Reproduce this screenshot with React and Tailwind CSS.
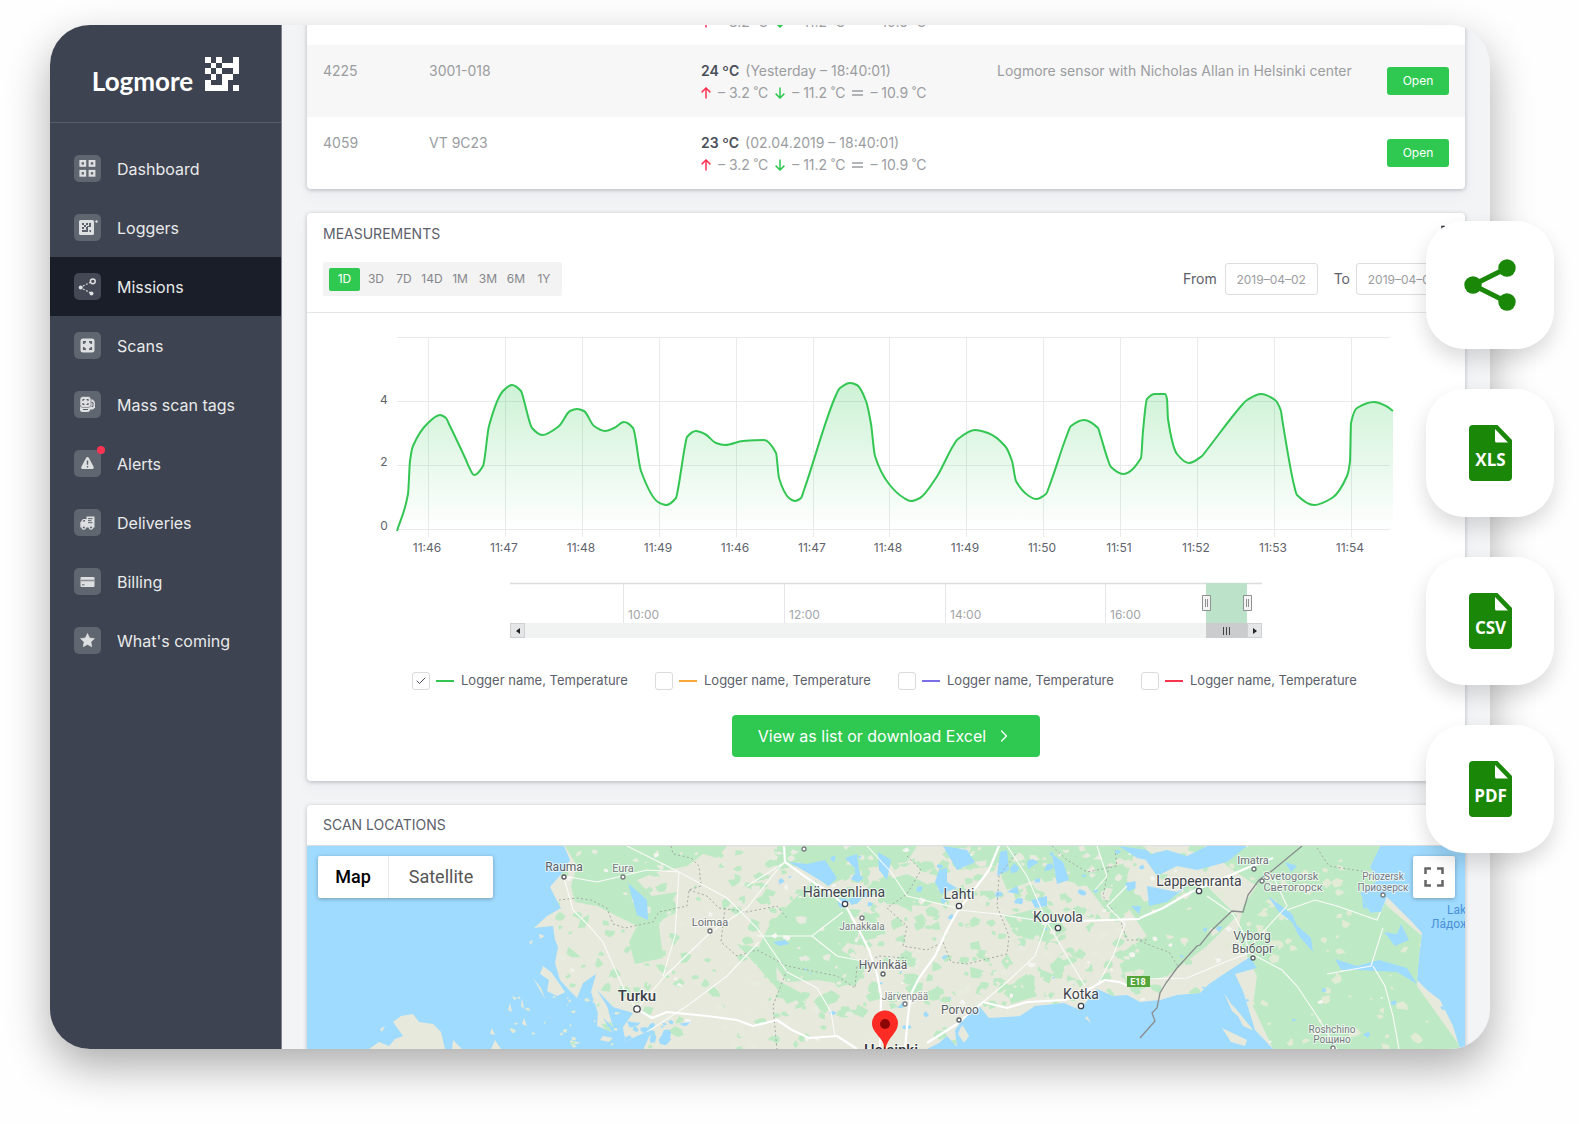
import React, { useState } from 'react'
import { ChevronRight, Check } from 'lucide-react'

/* ---------- Sidebar icons ---------- */

const iconFill = '#dedfe1'

const DashboardIcon = () => (
  <svg viewBox="0 0 27 27" className="w-[27px] h-[27px]" fill="none" stroke={iconFill} strokeWidth="2.2">
    <rect x="6.5" y="6.1" width="4.6" height="4.6" />
    <rect x="15.7" y="6.1" width="4.6" height="4.6" />
    <rect x="6.5" y="16" width="4.6" height="4.6" />
    <rect x="15.7" y="16" width="4.6" height="4.6" />
  </svg>
)

const LoggersIcon = () => (
  <svg viewBox="0 0 27 27" className="w-[27px] h-[27px]">
    <rect x="5" y="6" width="15" height="15" rx="1.5" fill={iconFill} />
    <path d="M8 9h2v2H8zM12 9h2v2h-2zM10 11h2v2h-2zM15 9h2v4h-4v-1h2zM8 13h2v2H8zM8 16h4v-3h2v5H8zM15.500 16h1.500v2h-1.500z" fill="#5b616b" />
    <circle cx="22.500" cy="7.500" r="1.200" fill={iconFill} />
  </svg>
)

const MissionsIcon = () => (
  <svg viewBox="0 0 27 27" className="w-[27px] h-[27px]">
    <circle cx="18.800" cy="8.300" r="2.400" fill="none" stroke={iconFill} strokeWidth="1.500" />
    <circle cx="6.700" cy="14.600" r="2" fill={iconFill} />
    <circle cx="17.500" cy="20.600" r="2" fill={iconFill} />
    <path d="M9 13l7-3.500M9 16l7 3.600" stroke={iconFill} strokeWidth="1.200" strokeDasharray="1.800 1.600" />
  </svg>
)

const ScansIcon = () => (
  <svg viewBox="0 0 27 27" className="w-[27px] h-[27px]">
    <rect x="6.500" y="6.500" width="14" height="14" rx="2.500" fill={iconFill} />
    <path d="M9.800 12V9.800H12M15 9.800h2.200V12M17.200 15v2.200H15M12 17.200H9.800V15" fill="none" stroke="#5b616b" strokeWidth="1.700" />
  </svg>
)

const MassScanIcon = () => (
  <svg viewBox="0 0 27 27" className="w-[27px] h-[27px]">
    <path d="M15 8.500h4l2 3v5l-2 2h-4z" fill={iconFill} />
    <path d="M17.500 11.500h1.500v4h-1.500" fill="none" stroke="#5b616b" />
    <rect x="6" y="14" width="10" height="7" rx="2.500" fill={iconFill} />
    <rect x="6" y="5.500" width="11" height="11" rx="3" fill={iconFill} stroke="#5f666f" strokeWidth=".6" />
    <path d="M9 10V8.500h1.500M12.500 8.500H14V10M14 12v1.500h-1.500M10.500 13.500H9V12M9 18.500h5" fill="none" stroke="#5b616b" strokeWidth="1.200" />
  </svg>
)

const AlertsIcon = () => (
  <svg viewBox="0 0 27 27" className="w-[27px] h-[27px]">
    <path d="M13.500 8.500L18.300 17.500H8.700Z" fill={iconFill} stroke={iconFill} strokeWidth="3" strokeLinejoin="round" />
    <path d="M13.500 10.500v4.200M13.500 16v1.500" stroke="#5b616b" strokeWidth="1.400" />
  </svg>
)

const DeliveriesIcon = () => (
  <svg viewBox="0 0 27 27" className="w-[27px] h-[27px]">
    <path d="M12.500 7.500h8v11H6.300v-5L9 10h3.500z" fill={iconFill} />
    <path d="M8.500 12.500l1.300-1.500h1.200v1.500z" fill="#5b616b" />
    <path d="M14 9.700h4.500M14 11.700h3.500M14 13.700h4.500" stroke="#5b616b" />
    <circle cx="9.800" cy="18.500" r="1.700" fill="#5b616b" stroke={iconFill} strokeWidth="1.300" />
    <circle cx="17" cy="18.500" r="1.700" fill="#5b616b" stroke={iconFill} strokeWidth="1.300" />
  </svg>
)

const BillingIcon = () => (
  <svg viewBox="0 0 27 27" className="w-[27px] h-[27px]">
    <rect x="6.500" y="9" width="14" height="10" rx="1" fill={iconFill} />
    <path d="M6.500 12.500h14" stroke="#8d9198" strokeWidth="1.600" />
    <path d="M8 16.800h2.500" stroke="#5b616b" />
  </svg>
)

const StarIcon = () => (
  <svg viewBox="0 0 27 27" className="w-[27px] h-[27px]">
    <path d="M13.500 6.500l2.100 4.500 4.900.6-3.600 3.300.9 4.900-4.300-2.400-4.300 2.400.9-4.900-3.600-3.300 4.900-.6z" fill={iconFill} stroke={iconFill} strokeLinejoin="round" strokeWidth=".6" />
  </svg>
)

const navItems = [
  { label: 'Dashboard', icon: <DashboardIcon /> },
  { label: 'Loggers', icon: <LoggersIcon /> },
  { label: 'Missions', icon: <MissionsIcon />, active: true },
  { label: 'Scans', icon: <ScansIcon /> },
  { label: 'Mass scan tags', icon: <MassScanIcon /> },
  { label: 'Alerts', icon: <AlertsIcon />, badge: true },
  { label: 'Deliveries', icon: <DeliveriesIcon /> },
  { label: 'Billing', icon: <BillingIcon /> },
  { label: "What's coming", icon: <StarIcon /> }
]

// 6x6 pixel mark next to the wordmark
const logoRows = ['#.#..#', '.#.###', '#.#..#', '.#.##.', '#..#..', '####.#']

const Logo = () => (
  <div className="flex items-start justify-center gap-3 h-[98px] pt-8 border-b border-[#575d69]">
    <span className="pt-2 font-['Lato'] font-bold text-[26px] leading-8 text-white">Logmore</span>
    <svg viewBox="0 0 6 6" className="w-[34px] h-[34px]" fill="#fff" shapeRendering="crispEdges">
      {logoRows.map((row, y) =>
        row.split('').map((c, x) => c === '#' && <rect key={`${x}-${y}`} x={x} y={y} width="1" height="1" />)
      )}
    </svg>
  </div>
)

const Sidebar = () => (
  <aside className="w-[232px] shrink-0 bg-[#3d4350] border-r border-[#7d828b]">
    <Logo />
    <nav className="pt-4">
      {navItems.map((item) => (
        <a
          key={item.label}
          href="#"
          className={`flex items-center gap-4 h-[59px] px-6 text-base text-[#e9eaeb] ${item.active ? 'bg-[#191e29]' : ''}`}
        >
          <span className={`relative rounded-[5px] ${item.active ? 'bg-[#434854]' : 'bg-[#5f666f]'}`}>
            {item.icon}
            {item.badge && <span className="absolute -top-1 -right-1 w-2 h-2 rounded-full bg-[#ff3352]"></span>}
          </span>
          {item.label}
        </a>
      ))}
    </nav>
  </aside>
)

/* ---------- Loggers table ---------- */

const rows = [
  { id: '4225', name: '3001-018', temp: '24 ºC', time: '(Yesterday – 18:40:01)', note: 'Logmore sensor with Nicholas Allan in Helsinki center' },
  { id: '4059', name: 'VT 9C23', temp: '23 ºC', time: '(02.04.2019 – 18:40:01)', note: '' }
]

const Arrow = ({ up }) => (
  <svg viewBox="0 0 10 12" className={`w-[10px] h-3 ${up ? 'text-[#ff3352]' : 'text-[#2fc851] rotate-180'}`} fill="none" stroke="currentColor" strokeWidth="1.500">
    <path d="M5 11.500V1M.6 5.400L5 1l4.400 4.400" />
  </svg>
)

const Readings = () => (
  <div className="flex items-center gap-[7px] whitespace-nowrap">
    <Arrow up />– 3.2 ˚C
    <Arrow />– 11.2 ˚C
    <svg viewBox="0 0 11 6" className="w-[11px] h-[6px]" stroke="#9b9da1" strokeWidth="1.500"><path d="M0 1h11M0 5h11" /></svg>– 10.9 ˚C
  </div>
)

const LoggersTable = () => (
  <table className="w-full table-fixed text-left text-sm leading-[22px] text-[#9b9da1]">
    <colgroup>
      <col className="w-[122px]" />
      <col className="w-[272px]" />
      <col className="w-[296px]" />
      <col />
      <col className="w-[94px]" />
    </colgroup>
    <tbody>
      <tr className="h-[34px]">
        <td colSpan={2}></td>
        <td className="align-top"><Readings /></td>
        <td colSpan={2}></td>
      </tr>
      {rows.map((row, index) => (
        <tr key={row.id} className={`h-[72px] ${index % 2 ? '' : 'bg-[#f7f7f7]'}`}>
          <td className="pt-[15px] pl-4 align-top">{row.id}</td>
          <td className="pt-[15px] align-top">{row.name}</td>
          <td className="pt-[15px] align-top">
            <strong className="font-semibold text-[#4a4e5a]">{row.temp}</strong>
            <span className="ml-[6px]">{row.time}</span>
            <Readings />
          </td>
          <td className="pt-[15px] align-top whitespace-nowrap">{row.note}</td>
          <td className="align-middle pl-4">
            <button className="block w-[62px] h-7 rounded-[3px] bg-[#2fc851] text-xs text-white">Open</button>
          </td>
        </tr>
      ))}
    </tbody>
  </table>
)

/* ---------- Measurements ---------- */

const ranges = ['1D', '3D', '7D', '14D', '1M', '3M', '6M', '1Y']
const times = ['11:46', '11:47', '11:48', '11:49', '11:46', '11:47', '11:48', '11:49', '11:50', '11:51', '11:52', '11:53', '11:54']

const points = [
  [90, 218], [101, 181], [103, 148], [106, 133], [121, 110], [133, 102], [139, 105], [142, 111], [159, 147], [162, 154],
  [167, 162], [176, 153], [182, 113], [196, 78], [205, 72], [214, 78], [216, 84], [223, 110], [225, 115], [235, 122],
  [252, 113], [263, 98], [270, 96], [277, 98], [287, 113], [298, 118], [307, 115], [317, 109], [326, 115], [334, 158],
  [351, 189], [359, 192], [369, 185], [371, 176], [378, 133], [380, 124], [389, 118], [398, 121], [409, 130], [418, 132],
  [436, 128], [457, 127], [469, 140], [472, 165], [482, 185], [488, 188], [494, 185], [497, 177], [529, 82], [533, 75],
  [543, 70], [550, 72], [559, 88], [564, 111], [568, 143], [582, 171], [597, 185], [604, 188], [613, 185], [629, 165],
  [632, 160], [646, 133], [651, 126], [668, 117], [681, 120], [698, 133], [705, 148], [709, 168], [722, 183], [729, 186],
  [739, 181], [742, 174], [760, 122], [764, 113], [777, 107], [791, 115], [793, 121], [801, 147], [804, 154], [816, 161],
  [834, 145], [836, 118], [840, 86], [848, 81], [858, 81], [860, 86], [861, 106], [870, 141], [882, 150], [895, 143],
  [899, 138], [935, 92], [940, 87], [954, 81], [968, 87], [974, 98], [975, 105], [987, 172], [990, 182], [1007, 192],
  [1025, 185], [1040, 163], [1043, 148], [1044, 110], [1050, 95], [1067, 89], [1079, 93], [1086, 98]
]

// Monotone cubic interpolation, so the curve never overshoots a reading
const smoothPath = (pts) => {
  const slope = pts.slice(1).map((p, i) => (p[1] - pts[i][1]) / (p[0] - pts[i][0]))
  const tangent = pts.map((p, i) => {
    if (i === 0) return slope[0]
    if (i === pts.length - 1) return slope[i - 1]
    const a = slope[i - 1]
    const b = slope[i]
    return a * b <= 0 ? 0 : (2 * a * b) / (a + b)
  })
  let d = `M${pts[0][0]} ${pts[0][1]}`
  for (let i = 1; i < pts.length; i++) {
    const [x0, y0] = pts[i - 1]
    const [x1, y1] = pts[i]
    const h = (x1 - x0) / 3
    d += `C${x0 + h} ${y0 + h * tangent[i - 1]} ${x1 - h} ${y1 - h * tangent[i]} ${x1} ${y1}`
  }
  return d
}

const curve = smoothPath(points)

const Chart = () => (
  <svg viewBox="0 0 1158 254" className="block w-full">
    <defs>
      <linearGradient id="area" x1="0" y1="0" x2="0" y2="1">
        <stop offset="0" stopColor="#2fc851" stopOpacity=".24" />
        <stop offset="1" stopColor="#2fc851" stopOpacity="0" />
      </linearGradient>
    </defs>
    <g stroke="#e8eaeb">
      {[24, 88, 152, 216].map((y) => <path key={y} d={`M90 ${y + 0.5}H1083`} />)}
      {times.map((t, i) => <path key={i} d={`M${Math.round(121 + i * 76.9) + 0.5} 24V224`} />)}
    </g>
    <path d={`${curve}V218H90Z`} fill="url(#area)" />
    <path d={curve} fill="none" stroke="#33c653" strokeWidth="2" />
    <g fill="#5f636c" fontSize="12" textAnchor="middle">
      <text x="77" y="91">4</text>
      <text x="77" y="153">2</text>
      <text x="77" y="217">0</text>
      {times.map((t, i) => <text key={i} x={Math.round(120 + i * 76.9)} y="239">{t}</text>)}
    </g>
  </svg>
)

const Navigator = () => (
  <div className="w-[752px] max-w-full mx-auto mt-4">
    <svg viewBox="0 0 752 40" className="block w-full overflow-visible">
      <path d="M0 .5H752" stroke="#d9dbdc" strokeWidth="1.500" />
      <g stroke="#e4e6e7">
        <path d="M113.500 1V40M274.500 1V40M435.500 1V40M595.500 1V40" />
      </g>
      <g fill="#a2a4a7" fontSize="12">
        <text x="118" y="36">10:00</text>
        <text x="279" y="36">12:00</text>
        <text x="440" y="36">14:00</text>
        <text x="600" y="36">16:00</text>
      </g>
      <rect x="696" y="0" width="41" height="40" fill="#bce3ca" />
      <g fill="#f4f4f4" stroke="#8f9193">
        <path d="M692.500 12.500h8v15h-8zM733.500 12.500h8v15h-8zM695.500 16v8M697.500 16v8M736.500 16v8M738.500 16v8" />
      </g>
    </svg>
    <div className="flex h-[15px] bg-[#f1f3f3]">
      <button aria-label="Scroll left" className="w-[15px] border border-[#cfd0d1] bg-[#e5e6e7] flex items-center justify-center">
        <svg viewBox="0 0 4 6" className="w-1 h-[6px]" fill="#222"><path d="M4 0v6L0 3z" /></svg>
      </button>
      <div className="flex-1"></div>
      <div className="w-[41px] bg-[#cbcccd] flex items-center justify-center gap-[2px]">
        <span className="w-px h-2 bg-[#444]"></span>
        <span className="w-px h-2 bg-[#444]"></span>
        <span className="w-px h-2 bg-[#444]"></span>
      </div>
      <button aria-label="Scroll right" className="w-[15px] border border-[#cfd0d1] bg-[#e5e6e7] flex items-center justify-center">
        <svg viewBox="0 0 4 6" className="w-1 h-[6px]" fill="#222"><path d="M0 0v6l4-3z" /></svg>
      </button>
    </div>
  </div>
)

const series = [
  { id: 's1', line: 'bg-[#33c653]', on: true },
  { id: 's2', line: 'bg-[#f7a93b]', on: false },
  { id: 's3', line: 'bg-[#7b6fe8]', on: false },
  { id: 's4', line: 'bg-[#f8344f]', on: false }
]

const Measurements = () => {
  const [range, setRange] = useState('1D')
  const [visible, setVisible] = useState(series.map((s) => s.on))

  const toggle = (index) => setVisible((prev) => prev.map((v, i) => (i === index ? !v : v)))

  return (
    <section className="bg-white rounded-[4px] shadow-[0_1px_4px_rgba(30,40,60,0.28),0_8px_20px_rgba(0,0,0,0.03)]">
      <div className="px-4 pt-[11px] pb-4 border-b border-[#e4e6e7]">
        <div className="flex items-start justify-between h-5">
          <h2 className="text-sm text-[#5c606b]">MEASUREMENTS</h2>
          <button aria-label="Expand">
            <svg viewBox="0 0 12 12" className="w-3 h-3" fill="none" stroke="#2a2d36" strokeWidth="1.500"><path d="M5 6V2.500H8M11 8v3H8" /></svg>
          </button>
        </div>
        <div className="flex items-center justify-between mt-[18px]">
          <div className="flex items-center h-[34px] pl-[6px] pr-1 rounded-[2px] bg-[#f3f3f3] text-xs text-[#85878c]">
            {ranges.map((r) => (
              <button
                key={r}
                onClick={() => setRange(r)}
                className={r === range ? 'w-[31px] h-[23px] mr-[2px] rounded-[2px] bg-[#2fc851] text-white' : 'w-7 h-[23px]'}
              >
                {r}
              </button>
            ))}
          </div>
          <div className="flex items-center text-sm text-[#5c606b]">
            <label htmlFor="from">From</label>
            <input id="from" type="text" defaultValue="2019–04–02" className="w-[93px] h-8 ml-2 rounded-[3px] border border-[#dcddde] text-center text-xs text-[#9b9da1]" />
            <label htmlFor="to" className="ml-4">To</label>
            <input id="to" type="text" defaultValue="2019–04–02" className="w-[93px] h-8 ml-[6px] rounded-[3px] border border-[#dcddde] text-center text-xs text-[#9b9da1]" />
          </div>
        </div>
      </div>

      <Chart />
      <Navigator />

      <div className="flex justify-center gap-6 mt-[33px]">
        {series.map((s, index) => (
          <label key={s.id} htmlFor={s.id} className="flex items-center w-[219px] h-5 text-[13px] text-[#5c606b] whitespace-nowrap">
            <span className="relative flex shrink-0 w-[18px] h-[18px]">
              <input
                id={s.id}
                type="checkbox"
                checked={visible[index]}
                onChange={() => toggle(index)}
                className="appearance-none w-[18px] h-[18px] rounded-[3px] border border-[#d9dbdc]"
              />
              {visible[index] && <Check className="absolute inset-[3px] w-3 h-3 text-[#4a4e5a] pointer-events-none" strokeWidth={2} />}
            </span>
            <span className={`shrink-0 w-[18px] h-[2px] ml-[6px] mr-[7px] ${s.line}`}></span>
            Logger name, Temperature
          </label>
        ))}
      </div>

      <div className="flex justify-center py-6">
        <button className="flex items-center justify-center gap-2 w-[308px] h-[42px] rounded-[4px] bg-[#2fc851] text-base text-white">
          View as list or download Excel
          <ChevronRight className="w-5 h-5" strokeWidth={1.5} />
        </button>
      </div>
    </section>
  )
}

/* ---------- Map ---------- */

const makeRandom = (seed) => () => {
  seed = (seed * 1664525 + 1013904223) % 4294967296
  return seed / 4294967296
}

// Scatters small irregular polygons over a box and returns them as one path
const scatter = (seed, count, x, y, w, h, size) => {
  const rnd = makeRandom(seed)
  let d = ''
  for (let i = 0; i < count; i++) {
    const cx = x + rnd() * w
    const cy = y + rnd() * h
    const r = size * (0.35 + rnd())
    const sides = 4 + Math.floor(rnd() * 4)
    const turn = rnd() * 6
    for (let k = 0; k < sides; k++) {
      const a = turn + (k / sides) * Math.PI * 2
      const rr = r * (0.4 + rnd() * 0.9)
      d += `${k ? 'L' : 'M'}${(cx + Math.cos(a) * rr).toFixed(1)} ${(cy + Math.sin(a) * rr * 0.8).toFixed(1)}`
    }
    d += 'Z'
  }
  return d
}

const mainland =
  'M257 0L263 14L256 26L243 41L248 51L254 62L240 70L227 82L246 80L248 94L251 101L248 117L253 134L262 144L270 152L276 137L289 128L284 146L291 167L306 181L300 160L290 144L306 161L326 167L316 181L318 196L330 190L345 184L336 204L326 230L620 230L620 203L632 197L640 190L650 201L648 184L660 170L673 161L682 172L700 171L713 170L728 160L757 157L773 164L784 150L790 143L806 150L820 149L833 156L853 154L870 149L893 147L902 138L920 126L943 111L950 122L928 128L936 145L940 158L948 184L966 203L985 230L1170 230L1153 203L1146 180L1133 154L1120 144L1110 134L1112 110L1115 87L1105 76L1093 64L1080 51L1074 66L1063 67L1053 47L1071 34L1063 21L1073 0Z'

const islands =
  'M233 128L242 134L240 145L250 150L258 146L254 140L244 126L236 120ZM226 132L238 153L234 142ZM291 164L305 186L290 180ZM203 157L205 166L201 164ZM215 152L217 163L214 160ZM185 182L188 189L183 188ZM62 203L72 196L82 200L88 193L96 190L86 176L94 170L106 168L112 176L126 178L134 186L138 203ZM146 194L155 203L145 203ZM184 203L188 194L194 203ZM217 172L220 180L215 178ZM241 170L247 175L243 172ZM296 190L306 192L302 196L293 194ZM263 194L274 197L264 199ZM73 183L78 180L75 186ZM917 147L934 173L925 165ZM915 182L940 194L938 200L924 196ZM925 158L946 184L936 180ZM655 178L662 190L657 197L651 188ZM780 170L784 177L778 172ZM222 96L226 94L224 99ZM232 88L238 90L233 93Z'

const greenAreas =
  'M258 0H420L410 12L396 8L380 20L350 26L330 34L345 50L370 46L352 80L356 112L328 118L322 96L330 80L310 70L290 60L268 56L264 40L270 20ZM470 0H610L600 16L560 22L520 40L500 18L470 24ZM480 60L505 36L530 56L552 84L534 104L560 120L548 140L510 134L480 136L466 116L452 100L462 80ZM430 98L468 104L470 134L500 150L480 158L468 140ZM640 0H830L820 30L840 60L800 66L780 40L740 30L700 44L690 20L650 24ZM700 70L740 60L760 84L740 96L716 92ZM820 60L900 40L930 70L900 100L860 130L820 140L810 110L840 90ZM700 140L720 128L730 150L704 158ZM900 0H1075L1070 40L1080 60L1115 90L1110 140L1155 203H966L946 160L950 130L930 90L936 60L950 40L920 20ZM560 40L600 28L640 48L620 60L580 58Z'

const majorRoads =
  'M477 0L478 16L500 32L525 48L540 62L552 84L562 104L570 128L574 150L573 203M692 0L682 24L664 48L650 66L640 84L628 110L612 132L604 148L601 170L598 203M330 163L345 172L360 166L400 170L430 174L446 180L470 174L485 184L502 192L530 190L550 203M620 197L650 178L676 156L700 162L720 156L758 154L784 142L798 134L812 136L822 140M740 76L833 73M833 72L856 62L884 46L940 22L966 12'

const minorRoads =
  'M257 32L266 64L282 80L296 96L310 128L320 150L330 163M257 30L290 36L340 24L372 26L420 52L450 82L480 126L510 142L524 166L528 190M330 163L358 130L404 86M372 26L368 90L356 130M372 26L320 0M404 86L440 62L470 24L478 16M478 16L440 40M450 90L505 90L536 66M505 90L530 110L560 116M652 64L690 68L740 76L728 110L700 136L676 156M740 76L760 110L778 140M560 0L584 26L600 50L650 62M700 0L720 30L740 76M820 40L800 60L818 78L806 110L790 140M790 0L800 30L788 44M833 133L880 132L918 116L943 107M943 107L936 86L926 68L900 50M943 107L975 124L990 140L1010 170L1030 203M966 30L980 60L943 100M980 64L1008 54L1030 60L1070 74L1080 50M1066 120L1078 140L1086 170L1092 203M1076 82L1064 120L1020 128M340 186L380 160L420 130L452 96'

const boundaries =
  'M364 0L366 8L384 12L392 20L394 40L382 44L380 60L352 66L346 76L318 82L306 78L300 62L284 54L270 52L252 54M382 44L400 50L412 62L440 66L470 60L480 72M418 62L414 96L430 110L450 104L480 120L500 124L530 130L548 142L550 120L572 110L600 112M600 10L614 24L600 48L580 62L600 80L596 100L620 104L636 96L644 116L660 118L700 108L702 90L690 60L692 30L710 6M470 204L466 160L480 124M745 0L760 14L780 26L810 20L808 4M1010 2L1022 20L1060 26M833 95L850 102L862 106L872 122M802 20L796 50L814 76L820 94L840 94'

const waters =
  'M321 37L340 54L341 74L330 69ZM482 16L500 18L518 14L530 32L522 40L506 30ZM538 12L550 8L552 26ZM571 6L584 14L580 34L572 24ZM636 0L660 4L668 16L650 24ZM632 24L640 22L640 36L650 42L634 48L628 36ZM693 6L700 4L702 24L690 30ZM745 8L756 16L762 34L750 38ZM724 54L740 50L740 60L728 62ZM466 96L478 94L482 98L472 100ZM836 10L860 4L880 10L900 0L940 0L920 16L890 24L870 20L850 30ZM840 40L870 46L880 40L860 56L842 60ZM961 50L985 68L990 80L972 66ZM984 74L1004 92L1006 106L992 90ZM1028 113L1050 120L1072 114L1100 122L1110 138L1090 126L1050 124L1034 124ZM1077 86L1090 88L1094 78L1102 94L1088 100ZM1055 48L1070 50L1072 64L1056 62ZM978 16L990 20L984 26ZM812 0L840 4L850 16L830 12ZM590 162L598 154L596 162ZM700 46L710 40L712 48ZM824 60L834 60L832 68Z'

const cities = [
  { name: 'Rauma', x: 257, y: 25, dot: [257, 31], size: 12, color: '#5a5f66' },
  { name: 'Eura', x: 316, y: 26, dot: [316, 31], size: 11, color: '#777b80' },
  { name: 'Loimaa', x: 403, y: 80, dot: [403, 85], size: 11, color: '#6a6e74' },
  { name: 'Turku', x: 330, y: 155, dot: [330, 163], size: 15, color: '#3b3e48', bold: true },
  { name: 'Hämeenlinna', x: 537, y: 51, dot: [538, 58], size: 14, color: '#3f434d' },
  { name: 'Janakkala', x: 555, y: 84, dot: [555, 72], size: 10, color: '#777b80' },
  { name: 'Hyvinkää', x: 576, y: 123, dot: [576, 128], size: 12, color: '#5a5f66' },
  { name: 'Järvenpää', x: 598, y: 154, dot: [598, 158], size: 10, color: '#777b80' },
  { name: 'Lahti', x: 652, y: 53, dot: [652, 60], size: 14, color: '#3f434d' },
  { name: 'Porvoo', x: 653, y: 168, dot: [652, 174], size: 12, color: '#5a5f66' },
  { name: 'Kouvola', x: 751, y: 76, dot: [751, 82], size: 14, color: '#3f434d' },
  { name: 'Kotka', x: 774, y: 153, dot: [774, 160], size: 14, color: '#3f434d' },
  { name: 'Lappeenranta', x: 892, y: 40, dot: [892, 45], size: 14, color: '#3f434d' },
  { name: 'Imatra', x: 946, y: 18, dot: [947, 23], size: 11, color: '#6a6e74' },
  { name: 'Svetogorsk', x: 984, y: 34, dot: [955, 35], size: 11, color: '#777b80' },
  { name: 'Светогорск', x: 986, y: 45, size: 11, color: '#777b80' },
  { name: 'Vyborg', x: 945, y: 94, size: 12, color: '#5a5f66' },
  { name: 'Выборг', x: 946, y: 107, dot: [946, 112], size: 12, color: '#5a5f66' },
  { name: 'Priozersk', x: 1076, y: 34, size: 10, color: '#777b80' },
  { name: 'Приозерск', x: 1076, y: 45, dot: [1076, 49], size: 10, color: '#777b80' },
  { name: 'Roshchino', x: 1025, y: 187, size: 10, color: '#777b80' },
  { name: 'Рощино', x: 1025, y: 197, dot: [1026, 202], size: 10, color: '#777b80' },
  { name: 'Helsinki', x: 584, y: 209, size: 15, color: '#2f323b', bold: true }
]

const dots = [...cities.filter((c) => c.dot), { name: 'north', dot: [497, 3], size: 10, color: '#777b80' }]

const MapDrawing = () => (
  <svg viewBox="0 0 1158 230" className="block w-full bg-[#9fdbff] font-['Roboto']">
    <defs>
      <clipPath id="land">
        <path d={mainland} />
        <path d={islands} />
      </clipPath>
    </defs>
    <g clipPath="url(#land)">
      <rect width="1158" height="230" fill="#e6e9db" />
      <path d={greenAreas} fill="#bdeac4" />
      <path d={scatter(7, 200, 240, 0, 430, 205, 6)} fill="#bdeac4" />
      <path d={scatter(11, 280, 460, 0, 440, 165, 7)} fill="#bdeac4" />
      <path d={scatter(23, 220, 250, 0, 600, 205, 4)} fill="#e8ebdf" />
      <path d={scatter(31, 110, 640, 0, 270, 160, 5)} fill="#e6e9db" />
      <path d={scatter(43, 110, 900, 0, 250, 205, 5)} fill="#e2ebd5" />
      <path d={scatter(57, 60, 250, 0, 890, 205, 3)} fill="#f4f5f0" />
      <path d={scatter(61, 28, 460, 0, 380, 60, 5)} fill="#9fdbff" />
      <path d={scatter(73, 30, 480, 70, 660, 120, 3)} fill="#9fdbff" />
      <path d={scatter(83, 26, 300, 172, 80, 30, 5)} fill="#9fdbff" />
      <path d={waters} fill="#9fdbff" />
      <path d={boundaries} fill="none" stroke="#a3aaa4" strokeDasharray="2 2.500" />
      <path d={minorRoads} fill="none" stroke="#fbfbf9" strokeWidth="1.100" />
      <path d={majorRoads} fill="none" stroke="#fff" strokeWidth="2.200" strokeLinejoin="round" />
    </g>
    <path d={scatter(91, 26, 205, 150, 120, 50, 3)} fill="#e0ebd6" />
    <path
      d="M995 0L966 24L952 34L941 49L936 66L925 65L905 84L893 99L890 100L870 122L859 137L853 147L850 162L845 167L848 175L833 192"
      fill="none"
      stroke="#8a8d8f"
      strokeWidth="1.300"
    />
    <g textAnchor="middle" stroke="#fff" strokeOpacity=".7" strokeWidth="2" strokeLinejoin="round" style={{ paintOrder: 'stroke' }}>
      {cities.map((c) => (
        <text key={c.name} x={c.x} y={c.y} fontSize={c.size} fontWeight={c.bold ? 500 : 400} fill={c.color}>
          {c.name}
        </text>
      ))}
    </g>
    {dots.map((c) => (
      <circle key={c.name} cx={c.dot[0]} cy={c.dot[1]} r={c.bold ? 3.2 : c.size > 12 ? 2.7 : 2} fill="#fff" stroke={c.color} strokeWidth="1.300" />
    ))}
    <rect x="820" y="130" width="23" height="11" fill="#55a63a" />
    <text x="831" y="139" textAnchor="middle" fontSize="9" fontWeight="700" fill="#fff">E18</text>
    <g fill="#4a90d9" fontSize="12">
      <text x="1140" y="68">Lake</text>
      <text x="1124" y="82">Ла́дожское</text>
    </g>
    <path d="M578 203C577 192 565 187 565 177.500a13 13 0 0 1 26 0C591 187 580 192 578.500 203Z" fill="#ff2b25" />
    <circle cx="578" cy="178" r="5" fill="#8c0606" />
  </svg>
)

const ScanLocations = () => (
  <section className="bg-white rounded-t-[4px] shadow-[0_1px_4px_rgba(30,40,60,0.28)]">
    <h2 className="flex items-center h-[41px] px-4 text-sm text-[#5c606b] border-b border-[#dcdee0]">SCAN LOCATIONS</h2>
    <div className="relative">
      <MapDrawing />
      <div className="absolute top-[10px] left-[11px] flex h-[42px] bg-white rounded-[2px] shadow-[0_1px_4px_rgba(0,0,0,0.3)] font-['Roboto'] text-lg">
        <button className="w-[71px] font-medium text-black border-r border-[#e8e8e8]">Map</button>
        <button className="w-[104px] text-[#565656]">Satellite</button>
      </div>
      <button aria-label="Full screen" className="absolute top-[10px] right-[10px] flex items-center justify-center w-[42px] h-[42px] bg-white rounded-[2px] shadow-[0_1px_4px_rgba(0,0,0,0.3)]">
        <svg viewBox="0 0 20 20" className="w-5 h-5" fill="none" stroke="#666" strokeWidth="2.500">
          <path d="M1.500 7V1.500H7M13 1.500h5.500V7M18.500 13v5.500H13M7 18.500H1.500V13" />
        </svg>
      </button>
    </div>
  </section>
)

/* ---------- Export buttons ---------- */

const ShareGlyph = () => (
  <svg viewBox="0 0 52 52" className="w-[52px] h-[52px]" fill="#1a8709">
    <path d="M43 9L9 26l34 17" fill="none" stroke="#1a8709" strokeWidth="5" />
    <circle cx="9" cy="26" r="8.700" />
    <circle cx="43" cy="9" r="8.700" />
    <circle cx="43" cy="43" r="8.700" />
  </svg>
)

const FileGlyph = ({ type }) => (
  <svg viewBox="0 0 43 56" className="w-[43px] h-[56px]">
    <path d="M4 0h24.500L43 15v37a4 4 0 0 1-4 4H4a4 4 0 0 1-4-4V4a4 4 0 0 1 4-4z" fill="#1a8709" />
    <path d="M26 4v12a1.500 1.500 0 0 0 1.500 1.500H39z" fill="#fff" />
    <text x="21.500" y="41" textAnchor="middle" fontSize="17" fontWeight="700" fill="#fff" className="font-['Open_Sans',sans-serif]">{type}</text>
  </svg>
)

const exportItems = [
  { label: 'Share', glyph: <ShareGlyph /> },
  { label: 'Download XLS', glyph: <FileGlyph type="XLS" /> },
  { label: 'Download CSV', glyph: <FileGlyph type="CSV" /> },
  { label: 'Download PDF', glyph: <FileGlyph type="PDF" /> }
]

const ExportButtons = () => (
  <div className="absolute top-[221px] right-[25px] flex flex-col gap-10">
    {exportItems.map((item) => (
      <button
        key={item.label}
        aria-label={item.label}
        className="flex items-center justify-center w-32 h-32 rounded-[38px] bg-white shadow-[0_10px_20px_rgba(0,0,0,0.14)]"
      >
        {item.glyph}
      </button>
    ))}
  </div>
)

const App = () => {
  return (
    <div className="relative h-screen pt-[25px] pr-[89px] pb-[75px] pl-[50px] bg-[#fefefe] font-['Inter',sans-serif]">
      <div className="flex h-full overflow-hidden rounded-[40px] bg-[#f3f4f6] shadow-[0_18px_44px_rgba(0,0,0,0.32)]">
        <Sidebar />
        <main className="flex-1 min-w-0 px-[25px]">
          {/* the page is scrolled part way down the logger list */}
          <div className="flex flex-col gap-6 -mt-[14px]">
            <section className="bg-white rounded-[4px] overflow-hidden shadow-[0_1px_4px_rgba(30,40,60,0.28),0_8px_20px_rgba(0,0,0,0.03)]">
              <LoggersTable />
            </section>
            <Measurements />
            <ScanLocations />
          </div>
        </main>
      </div>
      <ExportButtons />
    </div>
  )
}

export default App
